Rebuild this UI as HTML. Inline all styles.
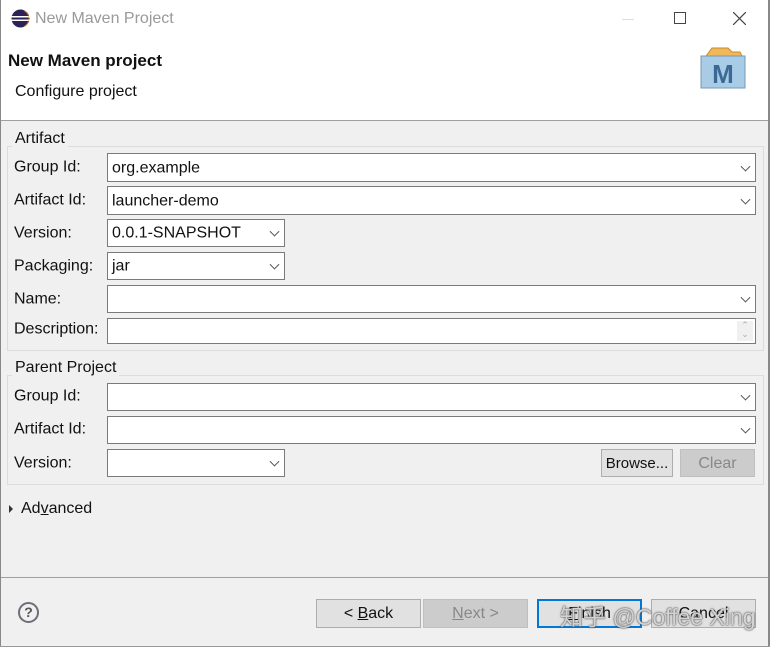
<!DOCTYPE html>
<html><head><meta charset="utf-8"><style>
*{box-sizing:border-box;margin:0;padding:0}
body{width:770px;height:647px;background:#f0f0f0;font-family:"Liberation Sans","Noto Sans CJK SC",sans-serif;font-size:16px;color:#111;position:relative;overflow:hidden}
.a{position:absolute;white-space:nowrap}
.box{position:absolute;background:#fff;border:1px solid #7a7a7a}
.chev{position:absolute;right:6px;top:50%;width:7px;height:7px;border-right:1px solid #555;border-bottom:1px solid #555;transform:translateY(-70%) rotate(45deg)}
.t{position:absolute;left:4px;top:50%;transform:translateY(-46%);font-size:16px}
.grp{position:absolute;border:1px solid #dcdcdc}
.lbl{position:absolute;left:14px;transform:translateY(-46%)}
.btn{position:absolute;top:599px;height:29px;border:1px solid #adadad;background:#e1e1e1;text-align:center;line-height:28px;font-size:16px}
</style></head><body>
<div class="a" style="left:0;top:0;width:770px;height:121px;background:#fff;border-bottom:1px solid #a0a0a0"></div>
<div class="a" style="left:0;top:0;width:1px;height:647px;background:#888"></div>
<div class="a" style="right:0;top:0;width:2px;height:647px;background:#888"></div>
<div class="a" style="left:0;bottom:0;width:770px;height:1px;background:#999"></div>
<svg class="a" style="left:11px;top:9px" width="19" height="19" viewBox="0 0 19 19"><circle cx="9.5" cy="9.5" r="9" fill="#2c2255"/><rect x="0" y="7" width="19" height="1.5" fill="#fff"/><rect x="0" y="10.5" width="19" height="1.5" fill="#fff"/><path d="M12 1.5 A8.5 8.5 0 0 1 12 17.5 A6 8 0 0 0 12 1.5Z" fill="#f7941e"/></svg>
<div class="a" style="left:35px;top:10px;font-size:16px;color:#999">New Maven Project</div>
<div class="a" style="left:622px;top:19px;width:12px;height:1px;background:#ddd"></div>
<div class="a" style="left:674px;top:12px;width:12px;height:12px;border:1px solid #444"></div>
<svg class="a" style="left:733px;top:12px" width="13" height="13"><path d="M0 0L13 13M13 0L0 13" stroke="#444" stroke-width="1.2"/></svg>
<div class="a" style="left:8px;top:51px;font-size:17px;font-weight:bold">New Maven project</div>
<div class="a" style="left:15px;top:83px;font-size:16px">Configure project</div>
<svg class="a" style="left:698px;top:46px" width="50" height="44" viewBox="0 0 50 44"><path d="M8 10 L14 2 H30 L34 6 H42 L44 10Z" fill="#f0b85a" stroke="#c98a2a"/><rect x="3" y="10" width="44" height="32" fill="#a8cbe6" stroke="#7a99b3"/><text x="25" y="37" text-anchor="middle" font-family="Liberation Sans" font-weight="bold" font-size="26" fill="#3a6a94">M</text></svg>

<div class="grp" style="left:7px;top:146px;width:757px;height:205px"></div>
<div class="a" style="left:12px;top:130px;background:#f0f0f0;padding:0 3px">Artifact</div>
<div class="lbl a" style="top:167px">Group Id:</div>
<div class="box" style="left:107px;top:153px;width:649px;height:29px"><span class="t">org.example</span><span class="chev"></span></div>
<div class="lbl a" style="top:200px">Artifact Id:</div>
<div class="box" style="left:107px;top:186px;width:649px;height:29px"><span class="t">launcher-demo</span><span class="chev"></span></div>
<div class="lbl a" style="top:233px">Version:</div>
<div class="box" style="left:107px;top:219px;width:178px;height:28px"><span class="t">0.0.1-SNAPSHOT</span><span class="chev"></span></div>
<div class="lbl a" style="top:266px">Packaging:</div>
<div class="box" style="left:107px;top:252px;width:178px;height:28px"><span class="t">jar</span><span class="chev"></span></div>
<div class="lbl a" style="top:299px">Name:</div>
<div class="box" style="left:107px;top:285px;width:649px;height:28px"><span class="chev"></span></div>
<div class="lbl a" style="top:329px">Description:</div>
<div class="box" style="left:107px;top:318px;width:649px;height:26px"><div style="position:absolute;right:2px;top:2px;width:16px;height:20px;background:#f0f0f0;color:#aaa;font-size:9px;line-height:9px;text-align:center">⌃<br>⌄</div></div>

<div class="grp" style="left:7px;top:375px;width:757px;height:110px"></div>
<div class="a" style="left:12px;top:359px;background:#f0f0f0;padding:0 3px">Parent Project</div>
<div class="lbl a" style="top:396px">Group Id:</div>
<div class="box" style="left:107px;top:383px;width:649px;height:28px"><span class="chev"></span></div>
<div class="lbl a" style="top:429px">Artifact Id:</div>
<div class="box" style="left:107px;top:416px;width:649px;height:28px"><span class="chev"></span></div>
<div class="lbl a" style="top:463px">Version:</div>
<div class="box" style="left:107px;top:449px;width:178px;height:28px"><span class="chev"></span></div>
<div class="btn" style="left:601px;top:449px;width:72px;height:28px;line-height:27px;font-size:15px">Browse...</div>
<div class="btn" style="left:680px;top:449px;width:75px;height:28px;line-height:27px;background:#ccc;border-color:#bfbfbf;color:#888">Clear</div>

<div class="a" style="left:9px;top:505px;width:0;height:0;border-left:4px solid #333;border-top:4px solid transparent;border-bottom:4px solid transparent"></div>
<div class="a" style="left:21px;top:500px">Ad<u>v</u>anced</div>

<div class="a" style="left:1px;top:577px;width:767px;height:1px;background:#a0a0a0"></div>
<div class="a" style="left:18px;top:602px;width:21px;height:21px;border:2px solid #6e6e78;border-radius:50%;text-align:center;line-height:17px;font-weight:bold;font-size:14px;color:#555">?</div>
<div class="btn" style="left:316px;width:105px">&lt; <u>B</u>ack</div>
<div class="btn" style="left:423px;width:105px;background:#ccc;border-color:#bfbfbf;color:#888"><u>N</u>ext &gt;</div>
<div class="btn" style="left:537px;width:105px;border:2px solid #0078d7;line-height:26px"><u>F</u>inish</div>
<div class="btn" style="left:651px;width:105px">Cancel</div>
<div class="a" style="left:560px;top:598px;font-size:23px;color:rgba(255,255,255,0.75);text-shadow:0 0 2px #555,0 0 1px #333">知乎 @Coffee Xing</div>
</body></html>
